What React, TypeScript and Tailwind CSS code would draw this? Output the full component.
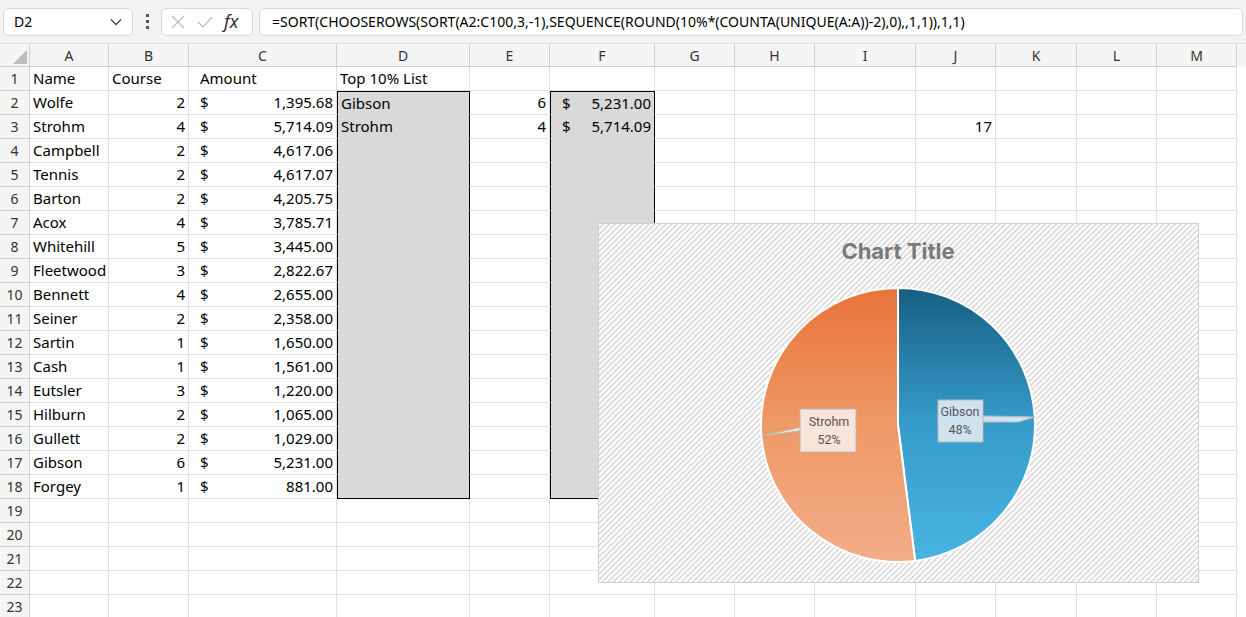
import React from 'react';

const cols = [
  { k: 'A', w: 79 }, { k: 'B', w: 80 }, { k: 'C', w: 148 }, { k: 'D', w: 133 },
  { k: 'E', w: 80 }, { k: 'F', w: 105 }, { k: 'G', w: 80 }, { k: 'H', w: 80 },
  { k: 'I', w: 101 }, { k: 'J', w: 80 }, { k: 'K', w: 81 }, { k: 'L', w: 80 }, { k: 'M', w: 80 },
];

const data: [string, number, string][] = [
  ['Wolfe', 2, '1,395.68'], ['Strohm', 4, '5,714.09'], ['Campbell', 2, '4,617.06'],
  ['Tennis', 2, '4,617.07'], ['Barton', 2, '4,205.75'], ['Acox', 4, '3,785.71'],
  ['Whitehill', 5, '3,445.00'], ['Fleetwood', 3, '2,822.67'], ['Bennett', 4, '2,655.00'],
  ['Seiner', 2, '2,358.00'], ['Sartin', 1, '1,650.00'], ['Cash', 1, '1,561.00'],
  ['Eutsler', 3, '1,220.00'], ['Hilburn', 2, '1,065.00'], ['Gullett', 2, '1,029.00'],
  ['Gibson', 6, '5,231.00'], ['Forgey', 1, '881.00'],
];

function cellContent(row: number, col: string): React.ReactNode {
  if (row === 1) {
    if (col === 'A') return 'Name';
    if (col === 'B') return 'Course';
    if (col === 'C') return <span className="pl-2">Amount</span>;
    if (col === 'D') return 'Top 10% List';
  }
  const d = data[row - 2];
  if (d) {
    if (col === 'A') return d[0];
    if (col === 'B') return <span className="ml-auto">{d[1]}</span>;
    if (col === 'C') return <><span className="pl-2">$</span><span className="ml-auto">{d[2]}</span></>;
  }
  if (row === 2 && col === 'D') return 'Gibson';
  if (row === 3 && col === 'D') return 'Strohm';
  if (row === 2 && col === 'E') return <span className="ml-auto">6</span>;
  if (row === 3 && col === 'E') return <span className="ml-auto">4</span>;
  if (row === 2 && col === 'F') return <><span className="pl-2">$</span><span className="ml-auto">5,231.00</span></>;
  if (row === 3 && col === 'F') return <><span className="pl-2">$</span><span className="ml-auto">5,714.09</span></>;
  if (row === 3 && col === 'J') return <span className="ml-auto">17</span>;
  return null;
}

function Cell({ row, col, w }: { row: number; col: string; w: number }) {
  const boxed = (col === 'D' || col === 'F') && row >= 2 && row <= 18;
  let cls = 'h-[24px] flex items-center px-[3px] shrink-0 whitespace-nowrap overflow-hidden border-r border-b ';
  if (boxed) {
    cls += 'bg-[#d9d9d9] border-l border-l-black border-r-black ';
    cls += row === 18 ? 'border-b-black ' : 'border-b-[#d9d9d9] ';
    if (row === 2) cls += 'border-t border-t-black ';
  } else {
    cls += 'border-[#e1e1e1] ';
  }
  return <div className={cls} style={{ width: w }}>{cellContent(row, col)}</div>;
}

function Chart() {
  const cx = 300, cy = 202, r = 137;
  const a = (172.8 * Math.PI) / 180;
  const ex = cx + r * Math.sin(a), ey = cy - r * Math.cos(a);
  return (
    <svg width="601" height="360" className="absolute left-[598px] top-[223px]">
      <defs>
        <pattern id="hatch" width="4" height="4" patternUnits="userSpaceOnUse" patternTransform="rotate(45)">
          <rect width="4" height="4" fill="#ffffff" />
          <rect width="1.6" height="4" fill="#d6d6d6" />
        </pattern>
        <linearGradient id="blue" x1="0" y1="0" x2="0" y2="1">
          <stop offset="0" stopColor="#175f83" />
          <stop offset="0.5" stopColor="#379ccb" />
          <stop offset="1" stopColor="#48b4e2" />
        </linearGradient>
        <linearGradient id="orange" x1="0" y1="0" x2="0" y2="1">
          <stop offset="0" stopColor="#e9733a" />
          <stop offset="0.5" stopColor="#ee9966" />
          <stop offset="1" stopColor="#f2ad88" />
        </linearGradient>
      </defs>
      <rect x="0.5" y="0.5" width="600" height="359" fill="url(#hatch)" stroke="#d0d0d0" />
      <text x="300" y="36" textAnchor="middle" fontFamily="Inter, sans-serif" fontWeight="700" fontSize="22" fill="#7a7a7a">Chart Title</text>
      <path d={`M${cx},${cy} L${cx},${cy - r} A${r},${r} 0 0 1 ${ex},${ey} Z`} fill="url(#blue)" stroke="#fff" strokeWidth="2" />
      <path d={`M${cx},${cy} L${ex},${ey} A${r},${r} 0 1 1 ${cx},${cy - r} Z`} fill="url(#orange)" stroke="#fff" strokeWidth="2" />
      <path d="M340,192 L437,194 L420,199 L340,199 Z" fill="#cfe3ef" stroke="#b8b8b8" />
      <rect x="340" y="177" width="45" height="42" fill="#cfe3ef" stroke="#b8b8b8" />
      <text x="362" y="193" textAnchor="middle" fontFamily="Roboto, sans-serif" fontSize="12.5" fill="#555">Gibson</text>
      <text x="362" y="211" textAnchor="middle" fontFamily="Roboto, sans-serif" fontSize="12.5" fill="#555">48%</text>
      <path d="M208,203 L164,213 L208,207 Z" fill="#f9e4d9" stroke="#b8b8b8" />
      <rect x="202" y="186" width="56" height="43" fill="#f9e4d9" stroke="#b8b8b8" />
      <text x="231" y="203" textAnchor="middle" fontFamily="Roboto, sans-serif" fontSize="12.5" fill="#555">Strohm</text>
      <text x="231" y="221" textAnchor="middle" fontFamily="Roboto, sans-serif" fontSize="12.5" fill="#555">52%</text>
    </svg>
  );
}

export default function App() {
  const rows = Array.from({ length: 23 }, (_, i) => i + 1);
  return (
    <div className="w-[1246px] h-[617px] overflow-hidden bg-white relative font-['Liberation_Sans',Arial,sans-serif] text-[15px] text-black">
      <div className="h-[44px] bg-[#f3f3f3] flex items-center gap-[6px] px-[3px] border-b border-[#e1e1e1]">
        <div className="w-[130px] h-[28px] bg-white border border-[#dcdcdc] rounded-[5px] flex items-center px-[10px] text-[14px]">
          D2
          <svg className="ml-auto" width="12" height="8" viewBox="0 0 12 8"><path d="M1 1.5 L6 6.5 L11 1.5" fill="none" stroke="#444" strokeWidth="1.3" /></svg>
        </div>
        <div className="w-[16px] flex flex-col items-center gap-[3px]">
          <span className="w-[3px] h-[3px] bg-[#555]" /><span className="w-[3px] h-[3px] bg-[#555]" /><span className="w-[3px] h-[3px] bg-[#555]" />
        </div>
        <div className="w-[92px] h-[28px] bg-white border border-[#dcdcdc] rounded-[5px] flex items-center px-[8px] gap-[10px]">
          <svg width="16" height="16" viewBox="0 0 16 16"><path d="M2 2 L14 14 M14 2 L2 14" stroke="#bbb" strokeWidth="1.2" /></svg>
          <svg width="18" height="16" viewBox="0 0 18 16"><path d="M2 8 L7 13 L16 3" fill="none" stroke="#bbb" strokeWidth="1.2" /></svg>
          <span className="font-['Liberation_Serif',serif] italic text-[18px] text-[#333]">fx</span>
        </div>
        <div className="flex-1 h-[28px] bg-white border border-[#dcdcdc] rounded-[5px] flex items-center px-[12px] text-[14px] whitespace-nowrap">
          =SORT(CHOOSEROWS(SORT(A2:C100,3,-1),SEQUENCE(ROUND(10%*(COUNTA(UNIQUE(A:A))-2),0),,1,1)),1,1)
        </div>
      </div>
      <div className="flex h-[23px] bg-[#f5f5f5] text-[14px] text-[#333]">
        <div className="w-[30px] shrink-0 border-r border-b border-[#d0d0d0] relative">
          <svg className="absolute right-[2px] bottom-[2px]" width="14" height="14" viewBox="0 0 14 14"><path d="M14 0 L14 14 L0 14 Z" fill="#bdbdbd" /></svg>
        </div>
        {cols.map(c => (
          <div key={c.k} className="shrink-0 flex items-center justify-center border-r border-b border-[#d0d0d0]" style={{ width: c.w }}>{c.k}</div>
        ))}
      </div>
      {rows.map(r => (
        <div key={r} className="flex">
          <div className="w-[30px] h-[24px] shrink-0 bg-[#f5f5f5] border-r border-b border-[#d0d0d0] flex items-center justify-center text-[14px] text-[#333]">{r}</div>
          {cols.map(c => <Cell key={c.k} row={r} col={c.k} w={c.w} />)}
        </div>
      ))}
      <Chart />
    </div>
  );
}
